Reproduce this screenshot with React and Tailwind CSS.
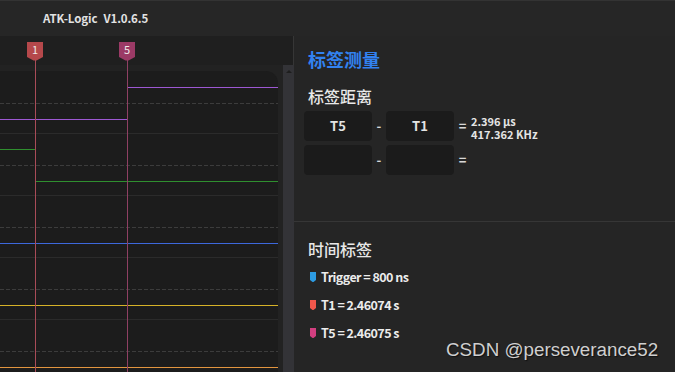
import React from "react";

const FONT = { fontFamily: '"Noto Sans CJK SC", "Noto Sans", sans-serif' };

function Flag({ color, label, left }) {
  return (
    <div className="absolute top-[6px] w-[16px] h-[19px]" style={{ left }}>
      <svg width="16" height="19" viewBox="0 0 16 19" className="absolute inset-0">
        <polygon points="0,0 16,0 16,15 9.5,18.5 6.5,18.5 0,15" fill={color} />
      </svg>
      <div className="relative h-[15px] flex items-center justify-center text-[11px] leading-none text-[#f0e8e8]">
        {label}
      </div>
    </div>
  );
}

function Plot() {
  const W = 278;
  const dashed = [32, 94, 156, 218, 280];
  const seps = [62, 124, 186, 248];
  return (
    <svg width={W} height="301" className="block">
      {seps.map((y) => (
        <line key={"s" + y} x1="0" x2={W} y1={y + 0.5} y2={y + 0.5} stroke="#2b2b2b" strokeWidth="1" />
      ))}
      {dashed.map((y) => (
        <line key={"d" + y} x1="0" x2={W} y1={y + 0.5} y2={y + 0.5} stroke="#3c3c3c" strokeWidth="1" strokeDasharray="4 2" />
      ))}
      <path d="M0 48.5 H127.5 V16.5 H278" fill="none" stroke="#9d58d2" strokeWidth="1" />
      <path d="M0 78.5 H35.5 V110.5 H278" fill="none" stroke="#2f8f2f" strokeWidth="1" />
      <line x1="0" x2={W} y1="172.5" y2="172.5" stroke="#3d68dc" strokeWidth="1" />
      <line x1="0" x2={W} y1="234.5" y2="234.5" stroke="#d6b228" strokeWidth="1" />
      <line x1="0" x2={W} y1="296.5" y2="296.5" stroke="#e2953f" strokeWidth="1" />
    </svg>
  );
}

function Tag({ color }) {
  return (
    <svg width="6" height="10" viewBox="0 0 6 10" className="shrink-0">
      <polygon points="0,0 6,0 6,8 3.5,10 2.5,10 0,8" fill={color} />
    </svg>
  );
}

function Box({ children }) {
  return (
    <div className="w-[68px] h-[30px] rounded-[4px] bg-[#1b1b1b] flex items-center justify-center text-[13px] font-semibold text-[#e4e4e4]">
      {children}
    </div>
  );
}

export default function App() {
  return (
    <div className="relative w-[675px] h-[372px] overflow-hidden bg-[#252525] flex flex-col" style={FONT}>
      {/* title bar */}
      <div className="h-[36px] shrink-0 bg-[#262626] border-t border-[#333333] flex items-center pl-[43px]">
        <span className="text-[11.5px] font-semibold text-[#e2e2e2] tracking-[-0.1px]">
          ATK-Logic<span className="inline-block w-[6px]" />V1.0.6.5
        </span>
      </div>

      <div className="flex flex-1 min-h-0">
        {/* left: waveform */}
        <div className="relative w-[294px] shrink-0 flex flex-col">
          <div className="relative h-[29px] w-[293px] shrink-0 bg-[#1f1f1f]">
            <Flag color="#b5484b" label="1" left={27} />
            <Flag color="#9b3a66" label="5" left={119} />
          </div>
          <div className="flex flex-1 min-h-0">
            <div className="w-[283px] bg-[#222222] pt-[6px]">
              <div className="w-[278px] h-full bg-[#1c1c1c] rounded-tr-[12px] overflow-hidden">
                <Plot />
              </div>
            </div>
            <div className="w-[11px] bg-[#333337] flex justify-center pt-[5px]">
              <svg width="6" height="4" viewBox="0 0 6 4">
                <polygon points="3,0 6,3 0,3" fill="#1e1e1e" />
              </svg>
            </div>
          </div>
          <div className="absolute left-[293px] top-0 h-[29px] w-px bg-[#363636]" />
          {/* marker lines */}
          <div className="absolute left-[35px] top-[24px] bottom-0 w-px bg-[#a94c58]" />
          <div className="absolute left-[127px] top-[24px] bottom-0 w-px bg-[#8f4063]" />
        </div>

        {/* right panel */}
        <div className="flex-1 flex flex-col bg-[#252525]">
          <div className="h-[186px] shrink-0 border-b border-[#363636] pl-[10px] pr-[10px]">
            <div className="pl-[4px] pt-[10px] text-[18px] font-bold text-[#3282f0] leading-[26px]">标签测量</div>
            <div className="pl-[4px] pt-[14px] text-[16px] font-medium text-[#e8e8e8] leading-[20px]">标签距离</div>
            <div className="mt-[5px] flex flex-col gap-[4px]">
              <div className="flex items-center">
                <Box>T5</Box>
                <span className="w-[14px] text-center text-[13px] text-[#d8d8d8] font-semibold">-</span>
                <Box>T1</Box>
                <span className="w-[17px] text-center text-[13px] text-[#d8d8d8] font-semibold">=</span>
                <div className="flex flex-col text-[11px] font-semibold leading-[13px] text-[#e4e4e4] pt-[3px]">
                  <span className="block h-[13px]">2.396 µs</span>
                  <span className="block h-[13px]">417.362 KHz</span>
                </div>
              </div>
              <div className="flex items-center">
                <Box />
                <span className="w-[14px] text-center text-[13px] text-[#d8d8d8] font-semibold">-</span>
                <Box />
                <span className="w-[17px] text-center text-[13px] text-[#d8d8d8] font-semibold">=</span>
              </div>
            </div>
          </div>
          <div className="pl-[14px]">
            <div className="pt-[16px] text-[16px] font-medium text-[#e8e8e8] leading-[22px]">时间标签</div>
            <div className="mt-[8px] flex flex-col gap-[10px]">
              {[
                ["#2d9be2", "Trigger = 800 ns"],
                ["#f0574b", "T1 = 2.46074 s"],
                ["#d23f80", "T5 = 2.46075 s"],
              ].map(([c, t]) => (
                <div key={t} className="flex items-center gap-[5px] h-[18px] pl-[2px]">
                  <Tag color={c} />
                  <span className="text-[12.5px] font-semibold text-[#ececec] tracking-[-0.55px]">{t}</span>
                </div>
              ))}
            </div>
          </div>
        </div>
      </div>

      {/* watermark */}
      <div
        className="absolute left-[446px] top-[338px] text-[18.8px] leading-[24px] text-[#cfcfcf]"
        style={{ fontFamily: '"Liberation Sans", Arial, sans-serif', textShadow: "1px 1px 1px #111" }}
      >
        CSDN @perseverance52
      </div>
    </div>
  );
}
